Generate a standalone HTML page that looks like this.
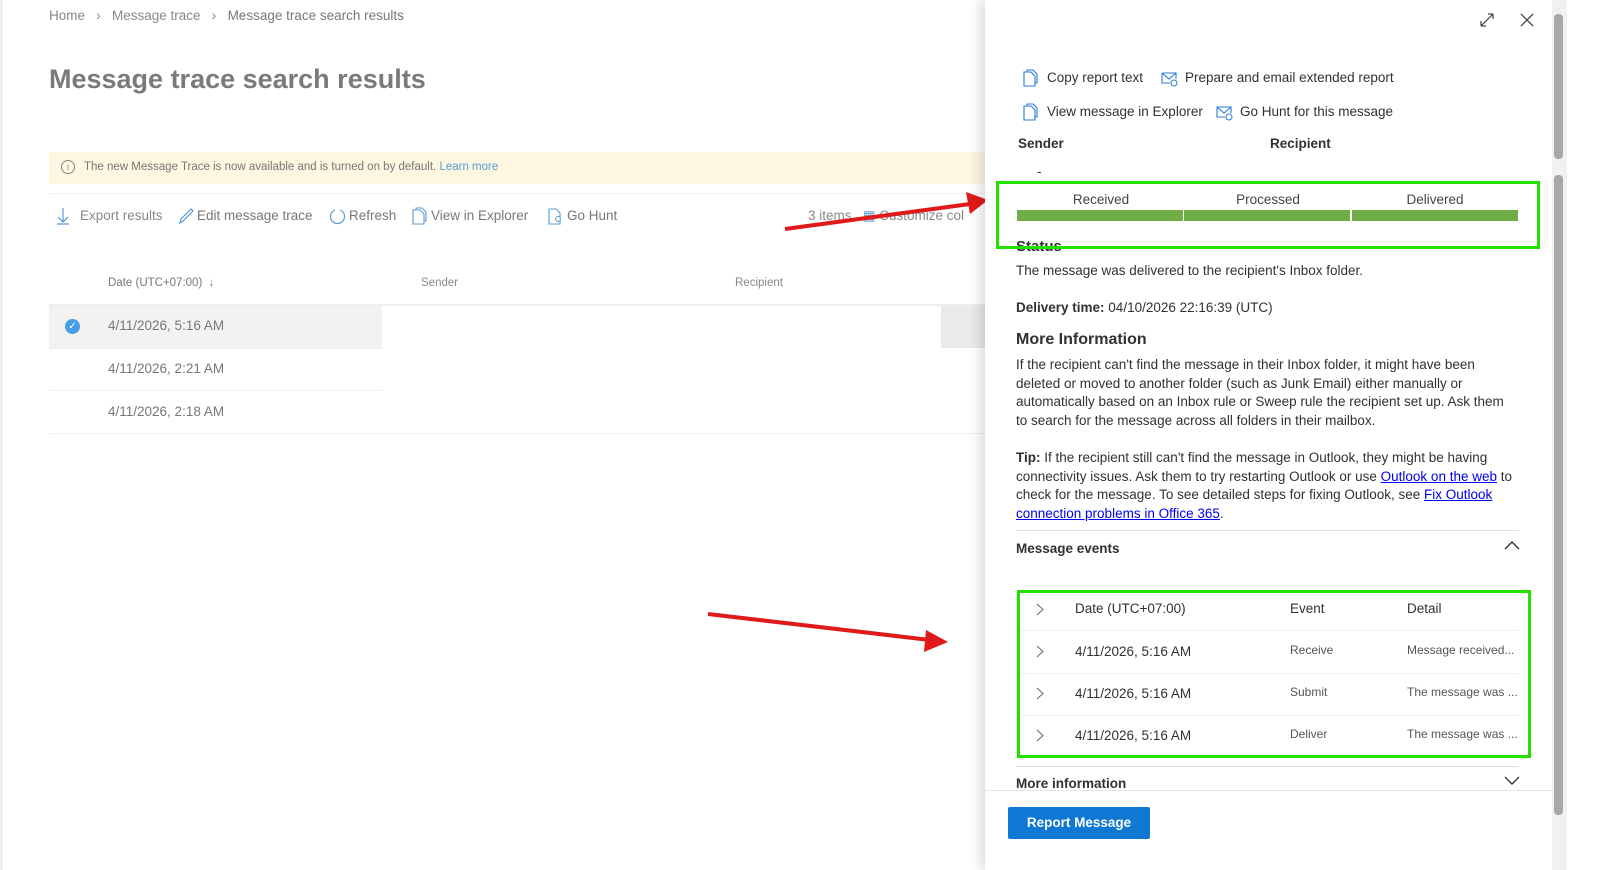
<!DOCTYPE html>
<html><head><meta charset="utf-8"><style>
*{box-sizing:border-box;margin:0;padding:0}
body{width:1599px;height:870px;overflow:hidden;background:#fff;font-family:"Liberation Sans",sans-serif;position:relative;color:#323130}
.a{position:absolute;white-space:nowrap}
.g{color:#8a8886}
.panel{position:absolute;left:985px;top:0;width:567px;height:870px;background:#fff;box-shadow:-6px 0 10px rgba(0,0,0,.12)}
.p{position:absolute;white-space:nowrap;font-size:13.5px;color:#323130}
a{color:#0000ee;text-decoration:underline}
.ico{position:absolute}
</style></head><body>
<div class="a" style="left:0;top:0;width:3px;height:870px;background:#eee"></div>
<div class="a g" style="left:49px;top:8px;font-size:13.5px">Home &nbsp;&nbsp;›&nbsp;&nbsp; Message trace &nbsp;&nbsp;›&nbsp;&nbsp; <span style="color:#777">Message trace search results</span></div>
<div class="a" style="left:49px;top:64px;font-size:27px;font-weight:bold;color:#7a7a7a">Message trace search results</div>
<div class="a" style="left:49px;top:152px;width:940px;height:32px;background:#fdf6e1"></div>
<div class="a" style="left:61px;top:160px;width:14px;height:14px;border:1px solid #888;border-radius:50%;font-size:9px;text-align:center;line-height:12px;color:#888">i</div>
<div class="a" style="left:84px;top:161px;font-size:11.5px;color:#777">The new Message Trace is now available and is turned on by default. <span style="color:#5a9bd5">Learn more</span></div>
<div class="a" style="left:49px;top:193px;width:940px;height:1px;background:#eee"></div>
<svg class="a" style="left:56px;top:207px" width="14" height="18"><path d="M7 1 V15 M2 10 L7 15 L12 10 M1 17 H13" stroke="#5a9bd5" stroke-width="1.2" fill="none"/></svg>
<div class="a" style="left:80px;top:208px;font-size:13.5px;color:#888">Export results</div>
<svg class="a" style="left:178px;top:207px" width="16" height="18"><path d="M2 16 L3 12 L13 2 L15 4 L5 14 Z" stroke="#5a9bd5" stroke-width="1.2" fill="none"/></svg>
<div class="a" style="left:197px;top:208px;font-size:13.5px;color:#777">Edit message trace</div>
<svg class="a" style="left:329px;top:207px" width="18" height="18"><path d="M6 3 A7 7 0 1 0 11 3" stroke="#5a9bd5" stroke-width="1.2" fill="none"/></svg>
<div class="a" style="left:349px;top:208px;font-size:13.5px;color:#777">Refresh</div>
<svg class="a" style="left:412px;top:207px" width="16" height="18"><path d="M1 3 H8 L12 7 V17 H1 Z M4 3 V1 H10 L14 5 V14 H12" stroke="#5a9bd5" stroke-width="1.1" fill="none"/></svg>
<div class="a" style="left:431px;top:208px;font-size:13.5px;color:#777">View in Explorer</div>
<svg class="a" style="left:548px;top:207px" width="16" height="18"><path d="M1 2 H8 L12 6 V17 H1 Z" stroke="#5a9bd5" stroke-width="1.1" fill="none"/><circle cx="10" cy="12" r="2.5" stroke="#5a9bd5" fill="#fff"/></svg>
<div class="a" style="left:567px;top:208px;font-size:13.5px;color:#777">Go Hunt</div>
<div class="a" style="left:808px;top:208px;font-size:13.5px;color:#888">3 items &nbsp;&nbsp;<span style="color:#5a9bd5">▦</span> Customize col</div>
<div class="a g" style="left:108px;top:277px;font-size:11.5px;color:#777">Date (UTC+07:00) &nbsp;↓</div>
<div class="a g" style="left:421px;top:277px;font-size:11.5px">Sender</div>
<div class="a g" style="left:735px;top:277px;font-size:11.5px">Recipient</div>
<div class="a" style="left:49px;top:304px;width:940px;height:2px;background:#eee"></div>
<div class="a" style="left:49px;top:306px;width:333px;height:42px;background:#f3f2f1"></div>
<div class="a" style="left:941px;top:306px;width:48px;height:42px;background:#eceae8"></div>
<div class="a" style="left:65px;top:319px;width:15px;height:15px;border-radius:50%;background:#4a9ee6;color:#fff;font-size:10px;text-align:center;line-height:15px">✓</div>
<div class="a" style="left:108px;top:318px;font-size:13.5px;color:#777">4/11/2026, 5:16 AM</div>
<div class="a" style="left:49px;top:348px;width:333px;height:1px;background:#eee"></div>
<div class="a" style="left:108px;top:361px;font-size:13.5px;color:#777">4/11/2026, 2:21 AM</div>
<div class="a" style="left:49px;top:390px;width:333px;height:1px;background:#eee"></div>
<div class="a" style="left:108px;top:404px;font-size:13.5px;color:#777">4/11/2026, 2:18 AM</div>
<div class="a" style="left:49px;top:433px;width:940px;height:1px;background:#eee"></div>
<svg class="a" style="left:700px;top:180px" width="300" height="480"><path d="M85 49 L270 24" stroke="#e01a1a" stroke-width="4"/><polygon points="288,20 266,12 270,34" fill="#e01a1a"/><path d="M8 434 L230 460" stroke="#e01a1a" stroke-width="4"/><polygon points="248,462 226,450 224,472" fill="#e01a1a"/></svg>

<div class="panel">
<svg class="ico" style="left:494px;top:12px" width="16" height="16"><path d="M2 14 L14 2 M2 14 V9 M2 14 H7 M14 2 H9 M14 2 V7" stroke="#444" stroke-width="1.2" fill="none"/></svg>
<svg class="ico" style="left:535px;top:13px" width="14" height="14"><path d="M1 1 L13 13 M13 1 L1 13" stroke="#444" stroke-width="1.3"/></svg>
<svg class="ico" style="left:38px;top:69px" width="16" height="18"><path d="M1 3 H8 L12 7 V17 H1 Z M4 3 V1 H10 L14 5 V14 H12" stroke="#2b7cd3" stroke-width="1.1" fill="none"/></svg>
<div class="p" style="left:62px;top:70px">Copy report text</div>
<svg class="ico" style="left:176px;top:71px" width="18" height="16"><path d="M1 2 H15 V8 M1 2 V12 H9 M1 2 L8 8 L15 2" stroke="#2b7cd3" stroke-width="1.1" fill="none"/><circle cx="13" cy="12" r="3" stroke="#2b7cd3" fill="#fff"/></svg>
<div class="p" style="left:200px;top:70px">Prepare and email extended report</div>
<svg class="ico" style="left:38px;top:103px" width="16" height="18"><path d="M1 3 H8 L12 7 V17 H1 Z M4 3 V1 H10 L14 5 V14 H12" stroke="#2b7cd3" stroke-width="1.1" fill="none"/></svg>
<div class="p" style="left:62px;top:104px">View message in Explorer</div>
<svg class="ico" style="left:231px;top:105px" width="18" height="16"><path d="M1 2 H15 V8 M1 2 V12 H9 M1 2 L8 8 L15 2" stroke="#2b7cd3" stroke-width="1.1" fill="none"/><circle cx="13" cy="12" r="3" stroke="#2b7cd3" fill="#fff"/></svg>
<div class="p" style="left:255px;top:104px">Go Hunt for this message</div>
<div class="p" style="left:33px;top:136px;font-weight:bold">Sender</div>
<div class="p" style="left:285px;top:136px;font-weight:bold">Recipient</div>
<div class="p" style="left:52px;top:164px">-</div>
<div class="p" style="left:32px;top:192px;width:168px;text-align:center;color:#444">Received</div>
<div class="p" style="left:199px;top:192px;width:168px;text-align:center;color:#444">Processed</div>
<div class="p" style="left:366px;top:192px;width:168px;text-align:center;color:#444">Delivered</div>
<div class="a" style="left:32px;top:210px;width:166px;height:11px;background:#70ad47"></div>
<div class="a" style="left:199px;top:210px;width:166px;height:11px;background:#70ad47"></div>
<div class="a" style="left:367px;top:210px;width:166px;height:11px;background:#70ad47"></div>
<div class="p" style="left:31px;top:238px;font-weight:bold;font-size:15px">Status</div>
<div class="a" style="left:11px;top:181px;width:544px;height:68px;border:3px solid #22e000"></div>
<div class="p" style="left:31px;top:263px">The message was delivered to the recipient's Inbox folder.</div>
<div class="p" style="left:31px;top:300px"><b>Delivery time:</b> 04/10/2026 22:16:39 (UTC)</div>
<div class="p" style="left:31px;top:331px;font-weight:bold;font-size:16px">More Information</div>
<div class="p" style="left:31px;top:356px;line-height:18.7px;white-space:normal;width:496px">If the recipient can't find the message in their Inbox folder, it might have been deleted or moved to another folder (such as Junk Email) either manually or automatically based on an Inbox rule or Sweep rule the recipient set up. Ask them to search for the message across all folders in their mailbox.</div>
<div class="p" style="left:31px;top:449px;line-height:18.7px;white-space:normal;width:496px"><b>Tip:</b> If the recipient still can't find the message in Outlook, they might be having connectivity issues. Ask them to try restarting Outlook or use <a>Outlook on the web</a> to check for the message. To see detailed steps for fixing Outlook, see <a>Fix Outlook connection problems in Office 365</a>.</div>
<div class="a" style="left:31px;top:530px;width:503px;height:1px;background:#ddd"></div>
<div class="p" style="left:31px;top:541px;font-weight:bold">Message events</div>
<svg class="a" style="left:519px;top:540px" width="16" height="10"><path d="M1 9 L8 2 L15 9" stroke="#333" stroke-width="1.4" fill="none"/></svg>
<div class="a" style="left:32px;top:590px;width:514px;height:168px;border:3px solid #22e000"></div>
<svg class="a" style="left:51px;top:603px" width="8" height="13"><path d="M1 1 L7 6.5 L1 12" stroke="#666" fill="none"/></svg>
<div class="p" style="left:90px;top:601px">Date (UTC+07:00)</div>
<div class="p" style="left:305px;top:601px">Event</div>
<div class="p" style="left:422px;top:601px">Detail</div>
<div class="a" style="left:36px;top:630px;width:498px;height:1px;background:#eee"></div>
<svg class="a" style="left:51px;top:645px" width="8" height="13"><path d="M1 1 L7 6.5 L1 12" stroke="#666" fill="none"/></svg>
<div class="p" style="left:90px;top:644px">4/11/2026, 5:16 AM</div><div class="p" style="left:305px;top:643px;font-size:12px;color:#555">Receive</div><div class="p" style="left:422px;top:643px;font-size:12px;color:#555">Message received...</div>
<div class="a" style="left:36px;top:673px;width:498px;height:1px;background:#eee"></div>
<svg class="a" style="left:51px;top:687px" width="8" height="13"><path d="M1 1 L7 6.5 L1 12" stroke="#666" fill="none"/></svg>
<div class="p" style="left:90px;top:686px">4/11/2026, 5:16 AM</div><div class="p" style="left:305px;top:685px;font-size:12px;color:#555">Submit</div><div class="p" style="left:422px;top:685px;font-size:12px;color:#555">The message was ...</div>
<div class="a" style="left:36px;top:715px;width:498px;height:1px;background:#eee"></div>
<svg class="a" style="left:51px;top:729px" width="8" height="13"><path d="M1 1 L7 6.5 L1 12" stroke="#666" fill="none"/></svg>
<div class="p" style="left:90px;top:728px">4/11/2026, 5:16 AM</div><div class="p" style="left:305px;top:727px;font-size:12px;color:#555">Deliver</div><div class="p" style="left:422px;top:727px;font-size:12px;color:#555">The message was ...</div>
<div class="a" style="left:31px;top:766px;width:503px;height:1px;background:#ddd"></div>
<div class="p" style="left:31px;top:776px;font-weight:bold">More information</div>
<svg class="a" style="left:519px;top:776px" width="16" height="10"><path d="M1 1 L8 8 L15 1" stroke="#333" stroke-width="1.4" fill="none"/></svg>
<div class="a" style="left:0;top:790px;width:567px;height:80px;background:#fff;border-top:1px solid #e6e6e6"></div>
<div class="a" style="left:23px;top:807px;width:142px;height:32px;background:#0f78d4;color:#fff;font-weight:bold;font-size:13.5px;text-align:center;line-height:32px;border-radius:2px">Report Message</div>
</div>
<div class="a" style="left:1552px;top:0;width:15px;height:870px;background:#f1f1f1"></div>
<div class="a" style="left:1554px;top:14px;width:9px;height:145px;background:#a8a8a8;border-radius:4px"></div>
<div class="a" style="left:1554px;top:175px;width:9px;height:640px;background:#a8a8a8;border-radius:4px"></div>
<div class="a" style="left:1567px;top:0;width:32px;height:870px;background:#fff"></div>
</body></html>
